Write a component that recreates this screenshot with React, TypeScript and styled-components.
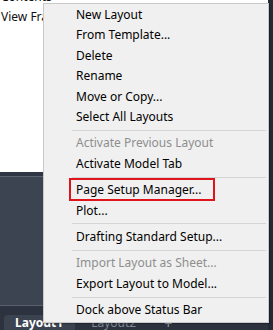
import React from 'react'
import styled, { createGlobalStyle } from 'styled-components'

type Entry = { label?: string; disabled?: boolean; marked?: boolean; sep?: boolean }

const entries: Entry[] = [
  { label: 'New Layout' },
  { label: 'From Template...' },
  { label: 'Delete' },
  { label: 'Rename' },
  { label: 'Move or Copy...' },
  { label: 'Select All Layouts' },
  { sep: true },
  { label: 'Activate Previous Layout', disabled: true },
  { label: 'Activate Model Tab' },
  { sep: true },
  { label: 'Page Setup Manager...', marked: true },
  { label: 'Plot...' },
  { sep: true },
  { label: 'Drafting Standard Setup...' },
  { sep: true },
  { label: 'Import Layout as Sheet...', disabled: true },
  { label: 'Export Layout to Model...' },
  { sep: true },
  { label: 'Dock above Status Bar' },
]

const GlobalStyle = createGlobalStyle`
  html, body {
    margin: 0;
    padding: 0;
  }
  body {
    width: 273px;
    height: 330px;
    overflow: hidden;
    font-family: "Noto Sans", "Open Sans", sans-serif;
  }
`

const Screen = styled.div`
  position: relative;
  width: 273px;
  height: 330px;
  display: grid;
  grid-template-columns: 1fr 5px;
  overflow: hidden;
`

const LeftPane = styled.div`
  display: flex;
  flex-direction: column;
  min-width: 0;
`

const Doc = styled.div`
  height: 172px;
  background: #ffffff;
  overflow: hidden;
`

const DocList = styled.ul`
  list-style: none;
  margin: -13px 0 0 0;
  padding: 0 0 0 1px;
  font-size: 12px;
  line-height: 20px;
  color: #111;
  white-space: nowrap;
`

const Canvas = styled.div`
  flex: 1;
  background: #3c4452;
  border-top: 4px solid #2f3643;
  box-shadow: inset 0 1px 0 #5b6371;
  border-bottom: 1px solid #59616e;
`

const TabBar = styled.div`
  height: 24px;
  background: #2c323e;
  display: flex;
  align-items: flex-end;
  padding-left: 4px;
  font-size: 12px;
  line-height: 15px;
`

const Tab = styled.div<{ $active?: boolean }>`
  padding: 0 ${p => (p.$active ? '12px' : '14px')} 0 ${p => (p.$active ? '11px' : '16px')};
  height: 15px;
  border-radius: 4px 4px 0 0;
  background: ${p => (p.$active ? '#3b4350' : 'transparent')};
  color: ${p => (p.$active ? '#ffffff' : '#7f8795')};
  font-weight: ${p => (p.$active ? 700 : 400)};
  white-space: nowrap;
`

const AddTab = styled.div`
  color: #9aa1ac;
  font-size: 14px;
  line-height: 12px;
  padding-left: 14px;
`

const RightStrip = styled.div`
  background: #252b36;
`

const Menu = styled.ul`
  position: absolute;
  left: 43px;
  top: 3px;
  width: 224px;
  margin: 0;
  padding: 1px 0 2px 0;
  list-style: none;
  background: #f0f0f0;
  border: 1px solid #c9c9c9;
  box-shadow: 1px 1px 1px rgba(0, 0, 0, 0.25);
  font-size: 12px;
`

const Item = styled.li<{ $disabled?: boolean }>`
  position: relative;
  height: 20.4px;
  line-height: 20.4px;
  padding-left: 32px;
  color: ${p => (p.$disabled ? '#8e8e8e' : '#000000')};
  white-space: nowrap;
`

const Mark = styled.span`
  position: absolute;
  left: 25px;
  top: -2px;
  width: 142px;
  height: 19px;
  border: 2px solid #e0141b;
`

const Separator = styled.li`
  height: 6px;
  display: flex;
  align-items: center;
  padding: 0 2px 0 28px;

  &::after {
    content: '';
    flex: 1;
    border-top: 1px solid #d5d5d5;
  }
`

export default function App() {
  return (
    <Screen>
      <GlobalStyle />
      <LeftPane>
        <Doc>
          <DocList>
            <li>Contents</li>
            <li>View Frames</li>
          </DocList>
        </Doc>
        <Canvas />
        <TabBar>
          <Tab $active>Layout1</Tab>
          <Tab>Layout2</Tab>
          <AddTab>+</AddTab>
        </TabBar>
      </LeftPane>
      <RightStrip />
      <Menu>
        {entries.map((e, i) =>
          e.sep ? (
            <Separator key={i} />
          ) : (
            <Item key={i} $disabled={e.disabled}>
              {e.label}
              {e.marked && <Mark />}
            </Item>
          )
        )}
      </Menu>
    </Screen>
  )
}
